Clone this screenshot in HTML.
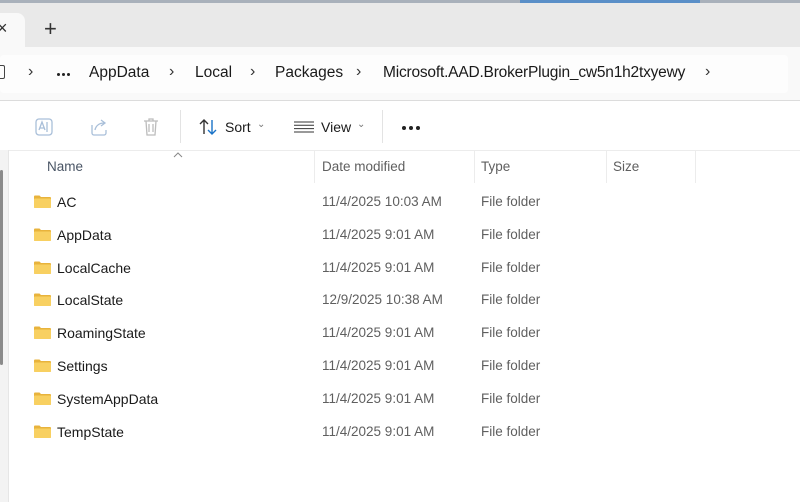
<!DOCTYPE html>
<html><head><style>
*{margin:0;padding:0;box-sizing:border-box}
body{width:800px;height:502px;overflow:hidden;background:#fff;font-family:"Segoe UI","Liberation Sans",sans-serif;position:relative;color:#1a1a1a}
.abs{position:absolute}
.t{font-size:14px;white-space:nowrap}
.g{color:#5f5f5f}
.row{position:absolute;left:0;width:800px;height:33px}
.folder{position:absolute;left:34px;width:17px;height:13px}
.dot{position:absolute;width:3px;height:3px;border-radius:50%;background:#222}
</style></head><body>
<div class="abs" style="left:0;top:0;width:800px;height:3px;background:#a9b1bb"></div>
<div class="abs" style="left:520px;top:0;width:180px;height:3px;background:#5a8fc8"></div>
<div class="abs" style="left:0;top:3px;width:800px;height:45px;background:#e9e9e9"></div>
<div class="abs" style="left:0;top:13px;width:25px;height:35px;background:#f9f9f9;border-top-right-radius:8px"></div>
<div class="abs t" style="left:-3px;top:18px;font-size:18px;color:#333">×</div>
<div class="abs t" style="left:44px;top:16px;font-size:22px;font-weight:300;color:#333">+</div>
<div class="abs" style="left:0;top:47px;width:800px;height:53px;background:#f9f9f9"></div>
<div class="abs" style="left:0;top:55px;width:788px;height:38px;background:#fdfdfd;border-radius:4px"></div>
<div class="abs" style="left:0;top:100px;width:800px;height:1px;background:#dcdcdc"></div>
<div class="abs" style="left:-6px;top:65px;width:11px;height:14px;border:1.5px solid #444;border-radius:2px"></div>
<div class="abs t" style="left:28px;top:63px;font-size:16px;color:#333">›</div>
<div class="dot" style="left:57px;top:73px"></div><div class="dot" style="left:62px;top:73px"></div><div class="dot" style="left:67px;top:73px"></div>
<div class="abs t" style="left:89px;top:64px;font-size:15.5px">AppData</div>
<div class="abs t" style="left:169px;top:63px;font-size:16px;color:#333">›</div>
<div class="abs t" style="left:195px;top:64px;font-size:15.5px">Local</div>
<div class="abs t" style="left:250px;top:63px;font-size:16px;color:#333">›</div>
<div class="abs t" style="left:275px;top:64px;font-size:15.5px">Packages</div>
<div class="abs t" style="left:356px;top:63px;font-size:16px;color:#333">›</div>
<div class="abs t" style="left:383px;top:64px;font-size:15.5px;letter-spacing:-0.2px">Microsoft.AAD.BrokerPlugin_cw5n1h2txyewy</div>
<div class="abs t" style="left:705px;top:63px;font-size:16px;color:#333">›</div>
<!-- toolbar -->
<svg class="abs" style="left:34px;top:117px" width="20" height="20" viewBox="0 0 20 20" fill="none" stroke="#a9bfd9" stroke-width="1.3"><rect x="2" y="2" width="16" height="16" rx="3"/><path d="M5 13l3-8 3 8M6 11h4M13 5v10"/></svg>
<svg class="abs" style="left:89px;top:117px" width="20" height="20" viewBox="0 0 20 20" fill="none" stroke="#a9bfd9" stroke-width="1.3"><path d="M3 8v8a2 2 0 002 2h10a2 2 0 002-2v-3"/><path d="M6 13c1-5 5-7 9-7M12 3l4 3-4 3"/></svg>
<svg class="abs" style="left:142px;top:117px" width="18" height="20" viewBox="0 0 18 20" fill="none" stroke="#bcbcbc" stroke-width="1.3"><path d="M2 4h14M7 4V2h4v2M4 4l1 14h8l1-14M7 7v8M11 7v8"/></svg>
<div class="abs" style="left:180px;top:110px;width:1px;height:33px;background:#e3e3e3"></div>
<svg class="abs" style="left:198px;top:118px" width="20" height="18" viewBox="0 0 20 18" fill="none" stroke-width="1.4"><path d="M6 16V2M2 6l4-4 4 4" stroke="#333"/><path d="M14 2v14M10 12l4 4 4-4" stroke="#1a73c8"/></svg>
<div class="abs t" style="left:225px;top:119px;font-size:14px">Sort</div>
<div class="abs t" style="left:257px;top:119px;font-size:10px;color:#777">⌄</div>
<svg class="abs" style="left:294px;top:121px" width="20" height="12" viewBox="0 0 20 12" stroke="#333" stroke-width="1"><path d="M0 1h20M0 4.3h20M0 7.6h20M0 11h20"/></svg>
<div class="abs t" style="left:321px;top:119px;font-size:14px">View</div>
<div class="abs t" style="left:357px;top:119px;font-size:10px;color:#777">⌄</div>
<div class="abs" style="left:382px;top:110px;width:1px;height:33px;background:#e3e3e3"></div>
<div class="dot" style="left:402px;top:126px;width:4px;height:4px"></div><div class="dot" style="left:409px;top:126px;width:4px;height:4px"></div><div class="dot" style="left:416px;top:126px;width:4px;height:4px"></div>
<!-- left scrollbar panel -->
<div class="abs" style="left:0;top:150px;width:9px;height:352px;background:#f3f3f3;border-right:1px solid #e6e6e6"></div>
<div class="abs" style="left:0;top:170px;width:3px;height:195px;background:#8a8a8a;border-radius:2px"></div>
<div class="abs" style="left:9px;top:150px;width:791px;height:1px;background:#ececec"></div>
<!-- header -->
<div class="abs t g" style="left:47px;top:159px;font-size:13.5px;color:#4a5565">Name</div>
<svg class="abs" style="left:173px;top:152px" width="10" height="6" viewBox="0 0 10 6" fill="none" stroke="#888" stroke-width="1"><path d="M1 5l4-4 4 4"/></svg>
<div class="abs" style="left:314px;top:151px;width:1px;height:32px;background:#ececec"></div>
<div class="abs t g" style="left:322px;top:159px;font-size:13.5px">Date modified</div>
<div class="abs" style="left:474px;top:151px;width:1px;height:32px;background:#ececec"></div>
<div class="abs t g" style="left:481px;top:159px;font-size:13.5px">Type</div>
<div class="abs" style="left:606px;top:151px;width:1px;height:32px;background:#ececec"></div>
<div class="abs t g" style="left:613px;top:159px;font-size:13.5px">Size</div>
<div class="abs" style="left:695px;top:151px;width:1px;height:32px;background:#ececec"></div>
<!-- rows -->
<div class="row" style="top:186px">
<svg class="folder" style="top:9px" viewBox="0 0 17 13"><path d="M0 1.5a1 1 0 011-1h4.5l1.5 1.5h9a1 1 0 011 1V12a1 1 0 01-1 1H1a1 1 0 01-1-1z" fill="#e8b33c"/><rect x="0" y="3.5" width="17" height="9.5" rx="1" fill="#f8d061"/></svg>
<div class="abs t" style="left:57px;top:8px">AC</div><div class="abs t g" style="left:322px;top:8px;font-size:13.5px">11/4/2025 10:03 AM</div><div class="abs t g" style="left:481px;top:8px;font-size:13.5px">File folder</div></div>
<div class="row" style="top:219px">
<svg class="folder" style="top:9px" viewBox="0 0 17 13"><path d="M0 1.5a1 1 0 011-1h4.5l1.5 1.5h9a1 1 0 011 1V12a1 1 0 01-1 1H1a1 1 0 01-1-1z" fill="#e8b33c"/><rect x="0" y="3.5" width="17" height="9.5" rx="1" fill="#f8d061"/></svg>
<div class="abs t" style="left:57px;top:8px">AppData</div><div class="abs t g" style="left:322px;top:8px;font-size:13.5px">11/4/2025 9:01 AM</div><div class="abs t g" style="left:481px;top:8px;font-size:13.5px">File folder</div></div>
<div class="row" style="top:252px">
<svg class="folder" style="top:9px" viewBox="0 0 17 13"><path d="M0 1.5a1 1 0 011-1h4.5l1.5 1.5h9a1 1 0 011 1V12a1 1 0 01-1 1H1a1 1 0 01-1-1z" fill="#e8b33c"/><rect x="0" y="3.5" width="17" height="9.5" rx="1" fill="#f8d061"/></svg>
<div class="abs t" style="left:57px;top:8px">LocalCache</div><div class="abs t g" style="left:322px;top:8px;font-size:13.5px">11/4/2025 9:01 AM</div><div class="abs t g" style="left:481px;top:8px;font-size:13.5px">File folder</div></div>
<div class="row" style="top:284px">
<svg class="folder" style="top:9px" viewBox="0 0 17 13"><path d="M0 1.5a1 1 0 011-1h4.5l1.5 1.5h9a1 1 0 011 1V12a1 1 0 01-1 1H1a1 1 0 01-1-1z" fill="#e8b33c"/><rect x="0" y="3.5" width="17" height="9.5" rx="1" fill="#f8d061"/></svg>
<div class="abs t" style="left:57px;top:8px">LocalState</div><div class="abs t g" style="left:322px;top:8px;font-size:13.5px">12/9/2025 10:38 AM</div><div class="abs t g" style="left:481px;top:8px;font-size:13.5px">File folder</div></div>
<div class="row" style="top:317px">
<svg class="folder" style="top:9px" viewBox="0 0 17 13"><path d="M0 1.5a1 1 0 011-1h4.5l1.5 1.5h9a1 1 0 011 1V12a1 1 0 01-1 1H1a1 1 0 01-1-1z" fill="#e8b33c"/><rect x="0" y="3.5" width="17" height="9.5" rx="1" fill="#f8d061"/></svg>
<div class="abs t" style="left:57px;top:8px">RoamingState</div><div class="abs t g" style="left:322px;top:8px;font-size:13.5px">11/4/2025 9:01 AM</div><div class="abs t g" style="left:481px;top:8px;font-size:13.5px">File folder</div></div>
<div class="row" style="top:350px">
<svg class="folder" style="top:9px" viewBox="0 0 17 13"><path d="M0 1.5a1 1 0 011-1h4.5l1.5 1.5h9a1 1 0 011 1V12a1 1 0 01-1 1H1a1 1 0 01-1-1z" fill="#e8b33c"/><rect x="0" y="3.5" width="17" height="9.5" rx="1" fill="#f8d061"/></svg>
<div class="abs t" style="left:57px;top:8px">Settings</div><div class="abs t g" style="left:322px;top:8px;font-size:13.5px">11/4/2025 9:01 AM</div><div class="abs t g" style="left:481px;top:8px;font-size:13.5px">File folder</div></div>
<div class="row" style="top:383px">
<svg class="folder" style="top:9px" viewBox="0 0 17 13"><path d="M0 1.5a1 1 0 011-1h4.5l1.5 1.5h9a1 1 0 011 1V12a1 1 0 01-1 1H1a1 1 0 01-1-1z" fill="#e8b33c"/><rect x="0" y="3.5" width="17" height="9.5" rx="1" fill="#f8d061"/></svg>
<div class="abs t" style="left:57px;top:8px">SystemAppData</div><div class="abs t g" style="left:322px;top:8px;font-size:13.5px">11/4/2025 9:01 AM</div><div class="abs t g" style="left:481px;top:8px;font-size:13.5px">File folder</div></div>
<div class="row" style="top:416px">
<svg class="folder" style="top:9px" viewBox="0 0 17 13"><path d="M0 1.5a1 1 0 011-1h4.5l1.5 1.5h9a1 1 0 011 1V12a1 1 0 01-1 1H1a1 1 0 01-1-1z" fill="#e8b33c"/><rect x="0" y="3.5" width="17" height="9.5" rx="1" fill="#f8d061"/></svg>
<div class="abs t" style="left:57px;top:8px">TempState</div><div class="abs t g" style="left:322px;top:8px;font-size:13.5px">11/4/2025 9:01 AM</div><div class="abs t g" style="left:481px;top:8px;font-size:13.5px">File folder</div></div>
</body></html>
